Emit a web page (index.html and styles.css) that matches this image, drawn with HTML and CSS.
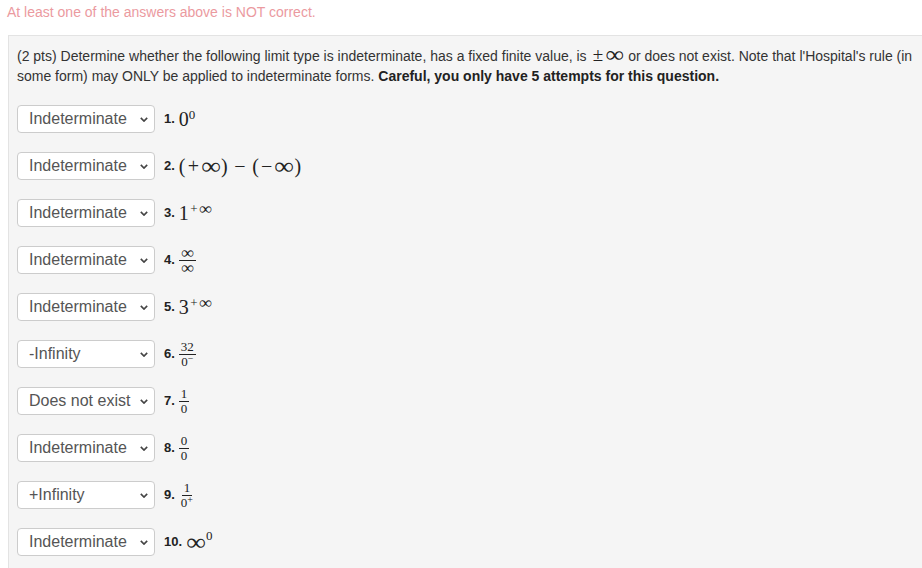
FILE: index.html
```html
<!DOCTYPE html>
<html>
<head>
<meta charset="utf-8">
<link rel="stylesheet" href="styles.css">
</head>
<body>
<div class="warning">At least one of the answers above is NOT correct.</div>
<div class="panel">
  <p class="prompt">(2 pts) Determine whether the following limit type is indeterminate, has a fixed finite value, is <span class="math inl"><span class="op">±</span><span class="inf">∞</span></span> or does not exist. Note that l'Hospital's rule (in some form) may ONLY be applied to indeterminate forms. <b>Careful, you only have 5 attempts for this question.</b></p>
  <div class="rows">
    <div class="row">
      <div class="sel"><span class="val">Indeterminate</span><svg class="chev" viewBox="0 0 10 6"><path d="M1 1 L5 5 L9 1" /></svg></div>
      <span class="num">1.</span><span class="math">0<sup>0</sup></span>
    </div>
    <div class="row">
      <div class="sel"><span class="val">Indeterminate</span><svg class="chev" viewBox="0 0 10 6"><path d="M1 1 L5 5 L9 1" /></svg></div>
      <span class="num">2.</span><span class="math">(<span class="op">+</span><span class="inf">∞</span>)<span class="bin">−</span>(<span class="op">−</span><span class="inf">∞</span>)</span>
    </div>
    <div class="row">
      <div class="sel"><span class="val">Indeterminate</span><svg class="chev" viewBox="0 0 10 6"><path d="M1 1 L5 5 L9 1" /></svg></div>
      <span class="num">3.</span><span class="math">1<sup><span class="op">+</span><span class="inf">∞</span></sup></span>
    </div>
    <div class="row">
      <div class="sel"><span class="val">Indeterminate</span><svg class="chev" viewBox="0 0 10 6"><path d="M1 1 L5 5 L9 1" /></svg></div>
      <span class="num">4.</span><span class="math frac"><span class="n"><span class="inf">∞</span></span><span class="d"><span class="inf">∞</span></span></span>
    </div>
    <div class="row">
      <div class="sel"><span class="val">Indeterminate</span><svg class="chev" viewBox="0 0 10 6"><path d="M1 1 L5 5 L9 1" /></svg></div>
      <span class="num">5.</span><span class="math">3<sup><span class="op">+</span><span class="inf">∞</span></sup></span>
    </div>
    <div class="row">
      <div class="sel"><span class="val">-Infinity</span><svg class="chev" viewBox="0 0 10 6"><path d="M1 1 L5 5 L9 1" /></svg></div>
      <span class="num">6.</span><span class="math frac"><span class="n">32</span><span class="d">0<sup>−</sup></span></span>
    </div>
    <div class="row">
      <div class="sel"><span class="val">Does not exist</span><svg class="chev" viewBox="0 0 10 6"><path d="M1 1 L5 5 L9 1" /></svg></div>
      <span class="num">7.</span><span class="math frac"><span class="n">1</span><span class="d">0</span></span>
    </div>
    <div class="row">
      <div class="sel"><span class="val">Indeterminate</span><svg class="chev" viewBox="0 0 10 6"><path d="M1 1 L5 5 L9 1" /></svg></div>
      <span class="num">8.</span><span class="math frac"><span class="n">0</span><span class="d">0</span></span>
    </div>
    <div class="row">
      <div class="sel"><span class="val">+Infinity</span><svg class="chev" viewBox="0 0 10 6"><path d="M1 1 L5 5 L9 1" /></svg></div>
      <span class="num">9.</span><span class="math frac"><span class="n">1</span><span class="d">0<sup>+</sup></span></span>
    </div>
    <div class="row">
      <div class="sel"><span class="val">Indeterminate</span><svg class="chev" viewBox="0 0 10 6"><path d="M1 1 L5 5 L9 1" /></svg></div>
      <span class="num">10.</span><span class="math"><span class="inf">∞</span><sup class="hi">0</sup></span>
    </div>
  </div>
</div>
</body>
</html>
```
FILE: styles.css
```css
html, body {
  margin: 0;
  padding: 0;
  background: #ffffff;
  overflow: hidden;
}
body {
  padding: 0 0 0 8px;
  font-family: "Liberation Sans", Arial, sans-serif;
  font-size: 14px;
  color: #333333;
  width: 914px;
  height: 568px;
}
.warning {
  margin: 2px 0 0 -1px;
  line-height: 20px;
  color: #eb9a9f;
  font-size: 14px;
}
.panel {
  margin-top: 13px;
  background: #f5f5f5;
  border: 1px solid #e3e3e3;
  border-right: none;
  border-bottom: none;
  padding: 10px 0 20px 8px;
  height: 533px;
  box-sizing: border-box;
  overflow: hidden;
}
.prompt {
  margin: 0;
  line-height: 20px;
  width: 900px;
  color: #333333;
}
.prompt b {
  color: #222;
}
.math {
  font-family: "Liberation Serif", "Times New Roman", serif;
  font-size: 20px;
  color: #222;
  line-height: 20px;
  white-space: nowrap;
}
.math.inl {
  font-size: 19px;
  line-height: 14px;
}
.op {
  display: inline-block;
  width: 0.78em;
  text-align: center;
}
.bin {
  display: inline-block;
  width: 0.78em;
  margin: 0 0.22em;
  text-align: center;
}
.inf {
  display: inline-block;
  width: 0.72em;
  margin: 0 0.14em;
  text-align: center;
  transform: scale(1.38, 1.2);
}
.rows {
  margin-top: 19px;
  display: flex;
  flex-direction: column;
  gap: 19px;
}
.row {
  display: flex;
  align-items: center;
  height: 28px;
}
.sel {
  position: relative;
  width: 138px;
  height: 28px;
  box-sizing: border-box;
  border: 1px solid #cccccc;
  border-radius: 4px;
  background: #ffffff;
  display: flex;
  align-items: center;
  padding-left: 11px;
  font-size: 16px;
  color: #555555;
  margin-right: 9px;
}
.chev {
  position: absolute;
  right: 6px;
  top: 11px;
  width: 8px;
  height: 5px;
  fill: none;
  stroke: #444;
  stroke-width: 2;
}
.num {
  font-weight: bold;
  font-size: 13px;
  color: #222;
  margin-right: 4px;
  margin-top: -1px;
}
.math sup {
  font-size: 13px;
  vertical-align: 7px;
  line-height: 0;
}
.math sup.hi {
  vertical-align: 9px;
}
.frac {
  display: inline-flex;
  flex-direction: column;
  align-items: center;
  font-size: 13px;
  line-height: 12px;
}
.frac .n {
  padding: 0 2px 1px;
  border-bottom: 1px solid #222;
}
.frac .d {
  padding: 1px 2px 0;
}
.frac sup {
  font-size: 10px;
  vertical-align: 4px;
}
```
